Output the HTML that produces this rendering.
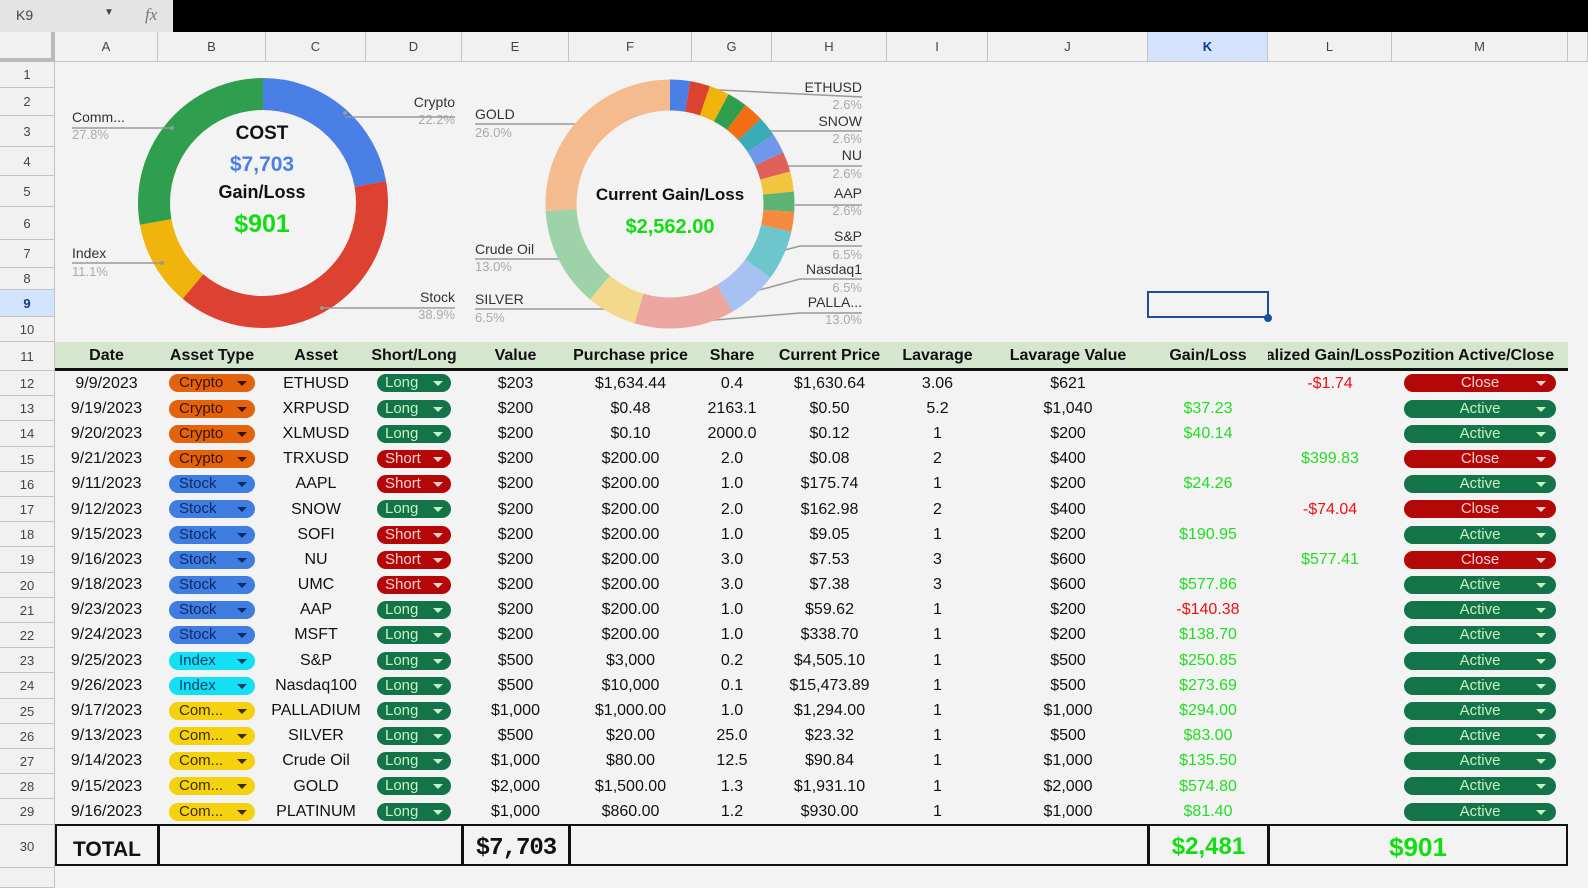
<!DOCTYPE html>
<html><head><meta charset="utf-8"><style>
*{margin:0;padding:0;box-sizing:border-box}
body{width:1588px;height:880px;overflow:hidden;background:#f3f3f3;font-family:"Liberation Sans",Arial,sans-serif;position:relative;color:#111}
.a{position:absolute}
.topbar{left:0;top:0;width:1588px;height:32px;background:#000}
.namebox{left:0;top:0;width:173px;height:32px;background:#e4e4e4;font-size:14px;color:#444}
.colh{top:32px;height:30px;background:#f1f1f1;border-right:1px solid #c4c4c4;border-bottom:1px solid #c4c4c4;font-size:13px;color:#444;text-align:center;line-height:30px}
.rowh{left:0;width:55px;background:#f1f1f1;border-bottom:1px solid #c4c4c4;border-right:1px solid #c4c4c4;font-size:13px;color:#444;text-align:center}
table{position:absolute;left:55px;border-collapse:collapse;table-layout:fixed}
td{height:25.2px;padding:0;text-align:center;font-size:16px;white-space:nowrap;overflow:hidden}
.ch{display:inline-block;height:18px;line-height:18px;border-radius:9px;font-size:15px;text-align:left;padding-left:10px;position:relative;vertical-align:middle}
.ch:after{content:"";position:absolute;right:8px;top:7px;border-left:5px solid transparent;border-right:5px solid transparent;border-top:5px solid currentColor}
.cr{background:#e3620c;color:#3a1300;width:86px}
.st{background:#3f7ee0;color:#0b2a66;width:86px}
.ix{background:#13e0f5;color:#073f66;width:86px}
.cm{background:#f5d10e;color:#3a2d00;width:86px}
.lg{background:#137449;color:#c8f2c0;width:74px;padding-left:8px}
.sh{background:#b40808;color:#ffd2d2;width:74px;padding-left:8px}
.ac{background:#137449;color:#c8f2c0;width:152px;text-align:center;padding-left:0}
.cl{background:#b40808;color:#ffd2d2;width:152px;text-align:center;padding-left:0}
.ac:after,.cl:after{right:10px}
.g{color:#22dd22}.r{color:#ee1111}
.hdr{left:55px;top:342px;width:1513px;height:29px;background:#d5e6cf;border-bottom:3px solid #111;font-weight:bold;font-size:16px}
.hdr span{position:absolute;top:5px;text-align:center;white-space:nowrap;overflow:hidden}
.tot{top:824px;height:42px;border:2px solid #111;font-weight:bold}
</style></head><body>
<div class="a topbar"></div>
<div class="a namebox"><span class="a" style="left:16px;top:7px">K9</span><span class="a" style="left:104px;top:7px;font-size:10px">▼</span><span class="a" style="left:145px;top:5px;font-style:italic;font-family:'Liberation Serif',serif;font-size:17px;color:#777">fx</span></div>
<!-- column headers -->
<div class="a colh" style="left:0;width:55px;border-right:4px solid #bbb;border-bottom:4px solid #bbb"></div>
<div class="a colh" style="left:55px;width:103px">A</div>
<div class="a colh" style="left:158px;width:108px">B</div>
<div class="a colh" style="left:266px;width:100px">C</div>
<div class="a colh" style="left:366px;width:96px">D</div>
<div class="a colh" style="left:462px;width:107px">E</div>
<div class="a colh" style="left:569px;width:123px">F</div>
<div class="a colh" style="left:692px;width:80px">G</div>
<div class="a colh" style="left:772px;width:115px">H</div>
<div class="a colh" style="left:887px;width:101px">I</div>
<div class="a colh" style="left:988px;width:160px">J</div>
<div class="a colh" style="left:1148px;width:120px;background:#d3e3fd;font-weight:bold;color:#0b3a8a">K</div>
<div class="a colh" style="left:1268px;width:124px">L</div>
<div class="a colh" style="left:1392px;width:176px">M</div>
<div class="a colh" style="left:1568px;width:20px"></div>
<!-- row headers -->
<div class="a rowh" style="top:62px;height:26px;line-height:26px">1</div>
<div class="a rowh" style="top:88px;height:28px;line-height:28px">2</div>
<div class="a rowh" style="top:116px;height:31px;line-height:31px">3</div>
<div class="a rowh" style="top:147px;height:29px;line-height:29px">4</div>
<div class="a rowh" style="top:176px;height:31px;line-height:31px">5</div>
<div class="a rowh" style="top:207px;height:33px;line-height:33px">6</div>
<div class="a rowh" style="top:240px;height:28px;line-height:28px">7</div>
<div class="a rowh" style="top:268px;height:22px;line-height:22px">8</div>
<div class="a rowh" style="top:290px;height:27px;line-height:27px;background:#d3e3fd;font-weight:bold;color:#0b3a8a">9</div>
<div class="a rowh" style="top:317px;height:25px;line-height:25px">10</div>
<div class="a rowh" style="top:342px;height:29px;line-height:29px">11</div>
<div class="a rowh" style="top:371px;height:25.2px;line-height:25px">12</div>
<div class="a rowh" style="top:396.2px;height:25.2px;line-height:25px">13</div>
<div class="a rowh" style="top:421.4px;height:25.2px;line-height:25px">14</div>
<div class="a rowh" style="top:446.6px;height:25.2px;line-height:25px">15</div>
<div class="a rowh" style="top:471.8px;height:25.2px;line-height:25px">16</div>
<div class="a rowh" style="top:497px;height:25.2px;line-height:25px">17</div>
<div class="a rowh" style="top:522.2px;height:25.2px;line-height:25px">18</div>
<div class="a rowh" style="top:547.4px;height:25.2px;line-height:25px">19</div>
<div class="a rowh" style="top:572.6px;height:25.2px;line-height:25px">20</div>
<div class="a rowh" style="top:597.8px;height:25.2px;line-height:25px">21</div>
<div class="a rowh" style="top:623px;height:25.2px;line-height:25px">22</div>
<div class="a rowh" style="top:648.2px;height:25.2px;line-height:25px">23</div>
<div class="a rowh" style="top:673.4px;height:25.2px;line-height:25px">24</div>
<div class="a rowh" style="top:698.6px;height:25.2px;line-height:25px">25</div>
<div class="a rowh" style="top:723.8px;height:25.2px;line-height:25px">26</div>
<div class="a rowh" style="top:749px;height:25.2px;line-height:25px">27</div>
<div class="a rowh" style="top:774.2px;height:25.2px;line-height:25px">28</div>
<div class="a rowh" style="top:799.4px;height:25.2px;line-height:25px">29</div>
<div class="a rowh" style="top:824.6px;height:43.4px;line-height:43px">30</div>
<div class="a rowh" style="top:868px;height:20px"></div>

<!-- charts -->
<svg class="a" style="left:0;top:0" width="1588" height="880" font-family="Liberation Sans,Arial,sans-serif">
<g transform="rotate(-90 263 203)" fill="none" stroke-width="32">
<circle cx="263" cy="203" r="109" stroke="#4a7fe6" stroke-dasharray="152.0 684.9" stroke-dashoffset="0"/>
<circle cx="263" cy="203" r="109" stroke="#dd4132" stroke-dasharray="266.4 684.9" stroke-dashoffset="-152.0"/>
<circle cx="263" cy="203" r="109" stroke="#f0b40c" stroke-dasharray="76.0 684.9" stroke-dashoffset="-418.4"/>
<circle cx="263" cy="203" r="109" stroke="#2f9e4e" stroke-dasharray="190.5 684.9" stroke-dashoffset="-494.4"/>
</g>
<g font-size="14" fill="#333">
<text x="72" y="122">Comm...</text><text x="455" y="107" text-anchor="end">Crypto</text>
<text x="72" y="258">Index</text><text x="455" y="302" text-anchor="end">Stock</text>
<text x="475" y="119">GOLD</text><text x="475" y="254">Crude Oil</text><text x="475" y="304">SILVER</text>
<text x="862" y="92" text-anchor="end">ETHUSD</text><text x="862" y="126" text-anchor="end">SNOW</text>
<text x="862" y="160" text-anchor="end">NU</text><text x="862" y="198" text-anchor="end">AAP</text>
<text x="862" y="241" text-anchor="end">S&amp;P</text><text x="862" y="274" text-anchor="end">Nasdaq1</text>
<text x="862" y="307" text-anchor="end">PALLA...</text>
</g>
<g font-size="13" fill="#aaa">
<text x="72" y="139">27.8%</text><text x="455" y="124" text-anchor="end">22.2%</text>
<text x="72" y="276">11.1%</text><text x="455" y="319" text-anchor="end">38.9%</text>
<text x="475" y="137">26.0%</text><text x="475" y="271">13.0%</text><text x="475" y="322">6.5%</text>
<text x="862" y="109" text-anchor="end">2.6%</text><text x="862" y="143" text-anchor="end">2.6%</text>
<text x="862" y="178" text-anchor="end">2.6%</text><text x="862" y="215" text-anchor="end">2.6%</text>
<text x="862" y="259" text-anchor="end">6.5%</text><text x="862" y="292" text-anchor="end">6.5%</text>
<text x="862" y="324" text-anchor="end">13.0%</text>
</g>
<g stroke="#999" stroke-width="1.5" fill="none">
<path d="M72 128H172M345 117H455M72 263H162M322 308H455M475 124H585M475 259H567M475 309H615"/>
<path d="M678 88L862 97M765 131H862M782 166H862M795 205H862M785 250L800 246H862M752 292L800 279H862M690 322L800 313H862"/>
</g>
<g fill="#999"><circle cx="172" cy="128" r="2"/><circle cx="345" cy="113" r="2"/><circle cx="162" cy="263" r="2"/><circle cx="322" cy="308" r="2"/><circle cx="585" cy="124" r="2"/><circle cx="567" cy="259" r="2"/><circle cx="615" cy="309" r="2"/></g>
<g transform="rotate(-90 670 204)" fill="none" stroke-width="31">
<circle cx="670" cy="204" r="109" stroke="#4a7fe6" stroke-dasharray="17.8 684.9" stroke-dashoffset="0"/>
<circle cx="670" cy="204" r="109" stroke="#dd4132" stroke-dasharray="17.8 684.9" stroke-dashoffset="-17.8"/>
<circle cx="670" cy="204" r="109" stroke="#f0b40c" stroke-dasharray="17.8 684.9" stroke-dashoffset="-35.6"/>
<circle cx="670" cy="204" r="109" stroke="#2f9e4e" stroke-dasharray="17.8 684.9" stroke-dashoffset="-53.4"/>
<circle cx="670" cy="204" r="109" stroke="#f36d12" stroke-dasharray="17.8 684.9" stroke-dashoffset="-71.2"/>
<circle cx="670" cy="204" r="109" stroke="#3aacb6" stroke-dasharray="17.8 684.9" stroke-dashoffset="-89.0"/>
<circle cx="670" cy="204" r="109" stroke="#6f97ec" stroke-dasharray="17.8 684.9" stroke-dashoffset="-106.8"/>
<circle cx="670" cy="204" r="109" stroke="#e0615a" stroke-dasharray="17.8 684.9" stroke-dashoffset="-124.6"/>
<circle cx="670" cy="204" r="109" stroke="#f3c43d" stroke-dasharray="17.8 684.9" stroke-dashoffset="-142.4"/>
<circle cx="670" cy="204" r="109" stroke="#5cb374" stroke-dasharray="17.8 684.9" stroke-dashoffset="-160.2"/>
<circle cx="670" cy="204" r="109" stroke="#f58b40" stroke-dasharray="17.8 684.9" stroke-dashoffset="-178.0"/>
<circle cx="670" cy="204" r="109" stroke="#6cc6cb" stroke-dasharray="44.5 684.9" stroke-dashoffset="-195.8"/>
<circle cx="670" cy="204" r="109" stroke="#a7c1f2" stroke-dasharray="44.5 684.9" stroke-dashoffset="-240.3"/>
<circle cx="670" cy="204" r="109" stroke="#eca6a0" stroke-dasharray="89.0 684.9" stroke-dashoffset="-284.8"/>
<circle cx="670" cy="204" r="109" stroke="#f3d98c" stroke-dasharray="44.5 684.9" stroke-dashoffset="-373.8"/>
<circle cx="670" cy="204" r="109" stroke="#9ed2a9" stroke-dasharray="89.0 684.9" stroke-dashoffset="-418.3"/>
<circle cx="670" cy="204" r="109" stroke="#f4bb8f" stroke-dasharray="177.6 684.9" stroke-dashoffset="-507.3"/>
</g>
<g font-weight="bold" text-anchor="middle">
<text x="262" y="139" font-size="19" fill="#111">COST</text>
<text x="262" y="171" font-size="21" fill="#4a7fe6">$7,703</text>
<text x="262" y="198" font-size="18" fill="#111">Gain/Loss</text>
<text x="262" y="232" font-size="25" fill="#11dd11">$901</text>
<text x="670" y="200" font-size="17" fill="#111">Current Gain/Loss</text>
<text x="670" y="233" font-size="20" fill="#11dd11">$2,562.00</text>
</g>
<rect x="1148" y="292" width="120" height="25" fill="none" stroke="#1a4fa0" stroke-width="2"/>
<circle cx="1268" cy="318" r="4" fill="#1a4fa0"/>
</svg>

<!-- header row -->
<div class="a hdr">
<span style="left:0;width:103px">Date</span><span style="left:103px;width:108px">Asset Type</span><span style="left:211px;width:100px">Asset</span><span style="left:311px;width:96px">Short/Long</span><span style="left:407px;width:107px">Value</span><span style="left:514px;width:123px">Purchase price</span><span style="left:637px;width:80px">Share</span><span style="left:717px;width:115px">Current Price</span><span style="left:832px;width:101px">Lavarage</span><span style="left:933px;width:160px">Lavarage Value</span><span style="left:1093px;width:120px">Gain/Loss</span><span style="left:1213px;width:124px;text-align:left;direction:rtl">Unrealized Gain/Loss</span><span style="left:1337px;width:176px;text-align:left">Pozition Active/Close</span>
</div>

<table style="top:371px">
<colgroup><col style="width:103px"><col style="width:108px"><col style="width:100px"><col style="width:96px"><col style="width:107px"><col style="width:123px"><col style="width:80px"><col style="width:115px"><col style="width:101px"><col style="width:160px"><col style="width:120px"><col style="width:124px"><col style="width:176px"></colgroup>
<tr><td>9/9/2023</td><td><span class="ch cr">Crypto</span></td><td>ETHUSD</td><td><span class="ch lg">Long</span></td><td>$203</td><td>$1,634.44</td><td>0.4</td><td>$1,630.64</td><td>3.06</td><td>$621</td><td></td><td class="r">-$1.74</td><td><span class="ch cl">Close</span></td></tr>
<tr><td>9/19/2023</td><td><span class="ch cr">Crypto</span></td><td>XRPUSD</td><td><span class="ch lg">Long</span></td><td>$200</td><td>$0.48</td><td>2163.1</td><td>$0.50</td><td>5.2</td><td>$1,040</td><td class="g">$37.23</td><td></td><td><span class="ch ac">Active</span></td></tr>
<tr><td>9/20/2023</td><td><span class="ch cr">Crypto</span></td><td>XLMUSD</td><td><span class="ch lg">Long</span></td><td>$200</td><td>$0.10</td><td>2000.0</td><td>$0.12</td><td>1</td><td>$200</td><td class="g">$40.14</td><td></td><td><span class="ch ac">Active</span></td></tr>
<tr><td>9/21/2023</td><td><span class="ch cr">Crypto</span></td><td>TRXUSD</td><td><span class="ch sh">Short</span></td><td>$200</td><td>$200.00</td><td>2.0</td><td>$0.08</td><td>2</td><td>$400</td><td></td><td class="g">$399.83</td><td><span class="ch cl">Close</span></td></tr>
<tr><td>9/11/2023</td><td><span class="ch st">Stock</span></td><td>AAPL</td><td><span class="ch sh">Short</span></td><td>$200</td><td>$200.00</td><td>1.0</td><td>$175.74</td><td>1</td><td>$200</td><td class="g">$24.26</td><td></td><td><span class="ch ac">Active</span></td></tr>
<tr><td>9/12/2023</td><td><span class="ch st">Stock</span></td><td>SNOW</td><td><span class="ch lg">Long</span></td><td>$200</td><td>$200.00</td><td>2.0</td><td>$162.98</td><td>2</td><td>$400</td><td></td><td class="r">-$74.04</td><td><span class="ch cl">Close</span></td></tr>
<tr><td>9/15/2023</td><td><span class="ch st">Stock</span></td><td>SOFI</td><td><span class="ch sh">Short</span></td><td>$200</td><td>$200.00</td><td>1.0</td><td>$9.05</td><td>1</td><td>$200</td><td class="g">$190.95</td><td></td><td><span class="ch ac">Active</span></td></tr>
<tr><td>9/16/2023</td><td><span class="ch st">Stock</span></td><td>NU</td><td><span class="ch sh">Short</span></td><td>$200</td><td>$200.00</td><td>3.0</td><td>$7.53</td><td>3</td><td>$600</td><td></td><td class="g">$577.41</td><td><span class="ch cl">Close</span></td></tr>
<tr><td>9/18/2023</td><td><span class="ch st">Stock</span></td><td>UMC</td><td><span class="ch sh">Short</span></td><td>$200</td><td>$200.00</td><td>3.0</td><td>$7.38</td><td>3</td><td>$600</td><td class="g">$577.86</td><td></td><td><span class="ch ac">Active</span></td></tr>
<tr><td>9/23/2023</td><td><span class="ch st">Stock</span></td><td>AAP</td><td><span class="ch lg">Long</span></td><td>$200</td><td>$200.00</td><td>1.0</td><td>$59.62</td><td>1</td><td>$200</td><td class="r">-$140.38</td><td></td><td><span class="ch ac">Active</span></td></tr>
<tr><td>9/24/2023</td><td><span class="ch st">Stock</span></td><td>MSFT</td><td><span class="ch lg">Long</span></td><td>$200</td><td>$200.00</td><td>1.0</td><td>$338.70</td><td>1</td><td>$200</td><td class="g">$138.70</td><td></td><td><span class="ch ac">Active</span></td></tr>
<tr><td>9/25/2023</td><td><span class="ch ix">Index</span></td><td>S&amp;P</td><td><span class="ch lg">Long</span></td><td>$500</td><td>$3,000</td><td>0.2</td><td>$4,505.10</td><td>1</td><td>$500</td><td class="g">$250.85</td><td></td><td><span class="ch ac">Active</span></td></tr>
<tr><td>9/26/2023</td><td><span class="ch ix">Index</span></td><td>Nasdaq100</td><td><span class="ch lg">Long</span></td><td>$500</td><td>$10,000</td><td>0.1</td><td>$15,473.89</td><td>1</td><td>$500</td><td class="g">$273.69</td><td></td><td><span class="ch ac">Active</span></td></tr>
<tr><td>9/17/2023</td><td><span class="ch cm">Com...</span></td><td>PALLADIUM</td><td><span class="ch lg">Long</span></td><td>$1,000</td><td>$1,000.00</td><td>1.0</td><td>$1,294.00</td><td>1</td><td>$1,000</td><td class="g">$294.00</td><td></td><td><span class="ch ac">Active</span></td></tr>
<tr><td>9/13/2023</td><td><span class="ch cm">Com...</span></td><td>SILVER</td><td><span class="ch lg">Long</span></td><td>$500</td><td>$20.00</td><td>25.0</td><td>$23.32</td><td>1</td><td>$500</td><td class="g">$83.00</td><td></td><td><span class="ch ac">Active</span></td></tr>
<tr><td>9/14/2023</td><td><span class="ch cm">Com...</span></td><td>Crude Oil</td><td><span class="ch lg">Long</span></td><td>$1,000</td><td>$80.00</td><td>12.5</td><td>$90.84</td><td>1</td><td>$1,000</td><td class="g">$135.50</td><td></td><td><span class="ch ac">Active</span></td></tr>
<tr><td>9/15/2023</td><td><span class="ch cm">Com...</span></td><td>GOLD</td><td><span class="ch lg">Long</span></td><td>$2,000</td><td>$1,500.00</td><td>1.3</td><td>$1,931.10</td><td>1</td><td>$2,000</td><td class="g">$574.80</td><td></td><td><span class="ch ac">Active</span></td></tr>
<tr><td>9/16/2023</td><td><span class="ch cm">Com...</span></td><td>PLATINUM</td><td><span class="ch lg">Long</span></td><td>$1,000</td><td>$860.00</td><td>1.2</td><td>$930.00</td><td>1</td><td>$1,000</td><td class="g">$81.40</td><td></td><td><span class="ch ac">Active</span></td></tr>
</table>

<!-- total row -->
<div class="a tot" style="left:55px;width:104px;font-size:21px;text-align:center;line-height:48px">TOTAL</div>
<div class="a tot" style="left:158px;width:305px"></div>
<div class="a tot" style="left:462px;width:108px;font-size:24px;text-align:center;line-height:46px;font-family:'Liberation Mono',monospace;letter-spacing:-1px">$7,703</div>
<div class="a tot" style="left:569px;width:580px"></div>
<div class="a tot" style="left:1148px;width:121px;font-size:24px;text-align:center;line-height:42px;color:#11dd11">$2,481</div>
<div class="a tot" style="left:1268px;width:300px;font-size:26px;text-align:center;line-height:42px;color:#11dd11">$901</div>
</body></html>
